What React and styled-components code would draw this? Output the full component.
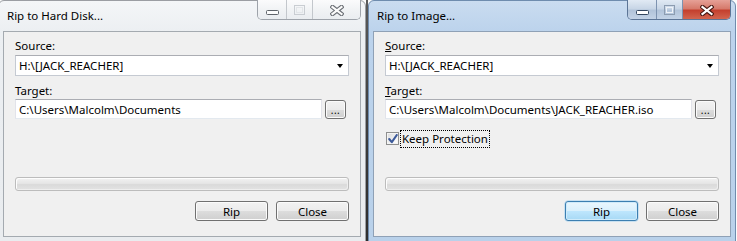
import React from 'react';
import styled, { createGlobalStyle, css } from 'styled-components';

const GlobalStyle = createGlobalStyle`
  html, body { margin: 0; padding: 0; background: #fafafa; }
  body {
    font-family: "Noto Sans", "Open Sans", sans-serif;
    font-size: 11.5px;
    color: #000;
    overflow: hidden;
  }
  #root { width: 737px; height: 241px; }
`;

const Desktop = styled.div`
  display: flex;
  width: 737px;
  height: 241px;
  overflow: hidden;
  background: #fbfbfb;
`;

const WindowGap = styled.div`
  flex: none;
  width: 2px;
  background: linear-gradient(#5a5a5a, #3a3a3a 60%, #2e2e2e);
`;

const Window = styled.div`
  flex: none;
  width: 368px;
  height: 242px;
  box-sizing: border-box;
  display: flex;
  flex-direction: column;
  padding: 0 4px 4px;
  border: 1px solid ${p => (p.$active ? '#6f8cae' : '#9b9ea3')};
  border-radius: 6px 6px 0 0;
  margin-left: ${p => p.$shift || 0}px;
  background: ${p =>
    p.$active
      ? 'linear-gradient(#cadcf0, #bcd3ec 30px, #b9d1ea)'
      : 'linear-gradient(#f4f6f8, #eceff2 30px, #e9ecef)'};
`;

const TitleBar = styled.div`
  flex: none;
  height: 30px;
  display: flex;
  align-items: flex-start;
`;

const Title = styled.div`
  padding: 7px 0 0 4px;
  font-size: 11.5px;
  line-height: 16px;
  color: #000;
  white-space: nowrap;
`;

const CaptionGroup = styled.div`
  margin: -1px 0 0 auto;
  display: flex;
  height: 20px;
  box-sizing: border-box;
  border: 1px solid ${p => (p.$active ? '#5c7596' : '#9ea3aa')};
  border-top: none;
  border-radius: 0 0 5px 5px;
  overflow: hidden;
`;

const CaptionButton = styled.div`
  width: ${p => p.$w}px;
  display: flex;
  align-items: center;
  justify-content: center;
  box-sizing: border-box;
  border-left: ${p => (p.$first ? 'none' : `1px solid ${p.$active ? '#7d93b0' : '#c3c7cc'}`)};
  background: ${p => {
    if (p.$active && p.$close)
      return 'linear-gradient(#e6a197 0%, #d67a6c 45%, #c4402e 55%, #d2654f 100%)';
    if (p.$active) return 'linear-gradient(#e1eaf4 0%, #c8d6e6 45%, #b2c4da 55%, #c3d3e6 100%)';
    return 'linear-gradient(#fbfbfc, #f1f3f5 50%, #eaedf0)';
  }};
`;

const Client = styled.div`
  flex: 1;
  display: flex;
  flex-direction: column;
  border: 1px solid ${p => (p.$active ? '#8fa1b6' : '#a4aab0')};
  background: #f0f0f0;
  padding: 6px 11px 15px;
  min-height: 0;
`;

const Label = styled.div`
  height: 15px;
  line-height: 15px;
  margin-top: ${p => p.$mt || 0}px;
  margin-bottom: ${p => p.$mb || 0}px;
  white-space: nowrap;
  u { text-decoration: underline; text-underline-offset: 1px; }
`;

const Combo = styled.div`
  height: 21px;
  box-sizing: border-box;
  display: flex;
  align-items: center;
  padding: 0 5px 0 3px;
  background: #fff;
  border: 1px solid #c5cad2;
  border-top-color: #abadb3;
`;

const FieldText = styled.span`
  flex: 1;
  white-space: nowrap;
  overflow: hidden;
`;

const Arrow = styled.span`
  width: 0;
  height: 0;
  border-left: 3.5px solid transparent;
  border-right: 3.5px solid transparent;
  border-top: 4px solid #000;
`;

const FieldRow = styled.div`
  display: flex;
  align-items: center;
  height: 20px;
`;

const TextBox = styled.div`
  flex: 1;
  height: 20px;
  box-sizing: border-box;
  display: flex;
  align-items: center;
  padding: 0 3px;
  background: #fff;
  border: 1px solid #e2e3ea;
  border-top-color: #abadb3;
  border-bottom-color: #e3e9ef;
`;

const buttonBase = css`
  box-sizing: border-box;
  display: flex;
  align-items: center;
  justify-content: center;
  border: 1px solid #707070;
  border-radius: 3px;
  background: linear-gradient(#f2f2f2 0%, #ebebeb 50%, #dddddd 51%, #cfcfcf 100%);
  box-shadow: inset 0 0 0 1px #fbfbfb;
  color: #000;
`;

const BrowseButton = styled.div`
  ${buttonBase};
  flex: none;
  width: 21px;
  height: 19px;
  margin: 0 3px;
  font-size: 10px;
  letter-spacing: 0.5px;
  padding-top: 2px;
`;

const CheckRow = styled.div`
  display: flex;
  align-items: center;
  height: 19px;
  margin-top: 10px;
`;

const CheckBox = styled.div`
  width: 13px;
  height: 13px;
  margin-left: 1px;
  box-sizing: border-box;
  border: 1px solid #8e8f8f;
  background: linear-gradient(135deg, #d9dadb, #f6f6f6 70%, #fff);
  box-shadow: inset 0 0 0 1px #f4f4f4;
  display: flex;
  align-items: center;
  justify-content: center;
`;

const CheckLabel = styled.div`
  margin-left: 2px;
  padding: 0 1px;
  height: 16px;
  line-height: 16px;
  outline: 1px dotted #000;
  outline-offset: 0;
  white-space: nowrap;
`;

const Progress = styled.div`
  flex: none;
  margin-top: auto;
  height: 14px;
  box-sizing: border-box;
  border: 1px solid #bcbcbc;
  border-radius: 3px;
  background: linear-gradient(#f2f2f2, #e6e6e6 45%, #dadada 55%, #e3e3e3);
  box-shadow: inset 1px 1px 0 #fdfdfd, inset -1px -1px 0 #eeeeee;
`;

const ButtonRow = styled.div`
  display: flex;
  justify-content: flex-end;
  gap: 8px;
  margin-top: 10px;
`;

const PushButton = styled.div`
  ${buttonBase};
  width: 73px;
  height: 20px;
  ${p =>
    p.$default &&
    css`
      border-color: #3c7fb1;
      background: linear-gradient(#eaf6fd 0%, #d9f0fc 50%, #bee6fd 51%, #a7d9f5 100%);
      box-shadow: inset 0 0 0 1px #d0ebfa, 0 0 0 0.5px #9fcff0;
    `}
`;

function MinGlyph({ active }) {
  return (
    <svg width="13" height="6" viewBox="0 0 13 6" style={{ marginTop: 7 }}>
      <rect x="0.5" y="0.5" width="12" height="4" rx="1" fill={active ? '#fff' : '#fdfdfd'} stroke={active ? '#33465e' : '#5f646a'} />
    </svg>
  );
}

function MaxGlyph({ active }) {
  return (
    <svg width="11" height="10" viewBox="0 0 11 10" style={{ marginTop: 1 }}>
      <rect x="0.5" y="0.5" width="10" height="9" fill="none" stroke={active ? '#8c9cb0' : '#c9cdd2'} />
      <rect x="2.5" y="2.5" width="6" height="5" fill="none" stroke={active ? '#eef2f7' : '#e2e5e8'} />
    </svg>
  );
}

function CloseGlyph({ active }) {
  const d = 'M2.5 2 L11.5 9 M11.5 2 L2.5 9';
  return (
    <svg width="14" height="11" viewBox="0 0 14 11" style={{ marginTop: 1 }}>
      <path d={d} stroke={active ? '#4a1a14' : '#6c7076'} strokeWidth="4.4" strokeLinecap="square" fill="none" />
      <path d={d} stroke={active ? '#ffffff' : '#fbfbfb'} strokeWidth="2.2" strokeLinecap="square" fill="none" />
    </svg>
  );
}

function CheckMark() {
  return (
    <svg width="10" height="10" viewBox="0 0 10 10">
      <path d="M1.2 5 L3.8 8.2 L8.8 1" stroke="#3d5a9a" strokeWidth="2.1" fill="none" strokeLinejoin="round" strokeLinecap="round" />
    </svg>
  );
}

function Dialog({ active, title, target, keepProtection, shift }) {
  return (
    <Window $active={active} $shift={shift}>
      <TitleBar>
        <Title>{title}</Title>
        <CaptionGroup $active={active}>
          <CaptionButton $w={28} $first $active={active}>
            <MinGlyph active={active} />
          </CaptionButton>
          <CaptionButton $w={26} $active={active}>
            <MaxGlyph active={active} />
          </CaptionButton>
          <CaptionButton $w={48} $close $active={active}>
            <CloseGlyph active={active} />
          </CaptionButton>
        </CaptionGroup>
      </TitleBar>
      <Client $active={active}>
        <Label $mb={2}>{active ? <><u>S</u>ource:</> : 'Source:'}</Label>
        <Combo>
          <FieldText>H:\[JACK_REACHER]</FieldText>
          <Arrow />
        </Combo>
        <Label $mt={7} $mb={1}>{active ? <><u>T</u>arget:</> : 'Target:'}</Label>
        <FieldRow>
          <TextBox>
            <FieldText>{target}</FieldText>
          </TextBox>
          <BrowseButton>...</BrowseButton>
        </FieldRow>
        {keepProtection && (
          <CheckRow>
            <CheckBox>
              <CheckMark />
            </CheckBox>
            <CheckLabel>Keep Protection</CheckLabel>
          </CheckRow>
        )}
        <Progress />
        <ButtonRow>
          <PushButton $default={active}>Rip</PushButton>
          <PushButton>Close</PushButton>
        </ButtonRow>
      </Client>
    </Window>
  );
}

export default function App() {
  return (
    <>
      <GlobalStyle />
      <Desktop>
        <Dialog title="Rip to Hard Disk..." target="C:\Users\Malcolm\Documents" shift={-2} />
        <WindowGap />
        <Dialog
          active
          title="Rip to Image..."
          target="C:\Users\Malcolm\Documents\JACK_REACHER.iso"
          keepProtection
        />
      </Desktop>
    </>
  );
}
